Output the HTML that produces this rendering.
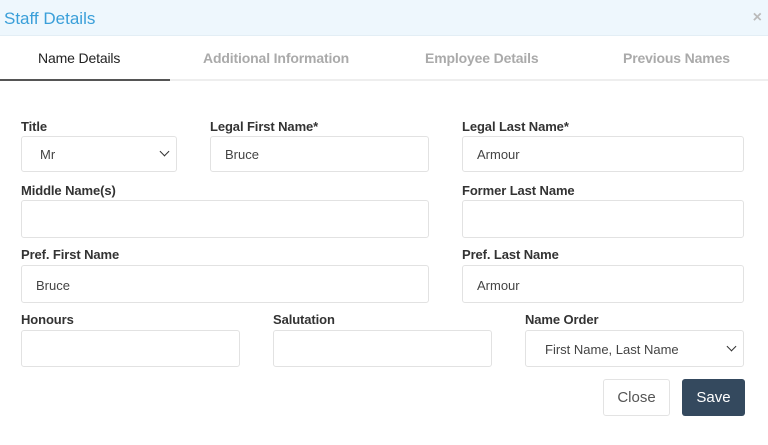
<!DOCTYPE html><html><head><style>
body{margin:0;width:768px;height:445px;background:#fff;font-family:"Liberation Sans",sans-serif;position:relative;overflow:hidden}
.a{position:absolute}
.hd{left:0;top:0;width:768px;height:35px;background:#eef7fd;border-bottom:1px solid #e3eef5}
.t{left:4px;top:9px;font-size:17px;color:#3a9fd9}
.x{right:6px;top:9px;color:#bbb;font-size:16px;font-weight:bold}
.tab{top:50px;font-size:14px;color:#aaa;font-weight:bold;letter-spacing:-0.15px}
.lb{font-size:13px;color:#333;font-weight:bold;letter-spacing:-0.1px}
.in{border:1px solid #e2e2e2;border-radius:3px;height:36px;box-sizing:border-box;font-size:13px;color:#444;padding:10px 0 0 14px}
.ch{position:absolute;right:8px;top:11px;width:6px;height:6px;border-right:1.6px solid #333;border-bottom:1.6px solid #333;transform:rotate(45deg)}
</style></head><body>
<div class="a hd"></div><div class="a t">Staff Details</div><div class="a x">×</div>
<div class="a tab" style="left:38px;color:#222;font-weight:normal">Name Details</div>
<div class="a tab" style="left:203px">Additional Information</div>
<div class="a tab" style="left:425px">Employee Details</div>
<div class="a tab" style="left:623px">Previous Names</div>
<div class="a" style="left:0;top:79px;width:170px;height:2px;background:#555"></div>
<div class="a" style="left:170px;top:79px;width:598px;height:2px;background:#eee"></div>

<div class="a lb" style="left:21px;top:119px">Title</div>
<div class="a in" style="left:21px;top:136px;width:156px;padding-left:18px">Mr<span class="ch"></span></div>
<div class="a lb" style="left:210px;top:119px">Legal First Name*</div>
<div class="a in" style="left:210px;top:136px;width:219px">Bruce</div>
<div class="a lb" style="left:462px;top:119px">Legal Last Name*</div>
<div class="a in" style="left:462px;top:136px;width:282px">Armour</div>

<div class="a lb" style="left:21px;top:183px">Middle Name(s)</div>
<div class="a in" style="left:21px;top:200px;width:408px;height:38px"></div>
<div class="a lb" style="left:462px;top:183px">Former Last Name</div>
<div class="a in" style="left:462px;top:200px;width:282px;height:38px"></div>

<div class="a lb" style="left:21px;top:247px">Pref. First Name</div>
<div class="a in" style="left:21px;top:265px;width:408px;height:38px;padding-top:12px">Bruce</div>
<div class="a lb" style="left:462px;top:247px">Pref. Last Name</div>
<div class="a in" style="left:462px;top:265px;width:282px;height:38px;padding-top:12px">Armour</div>

<div class="a lb" style="left:21px;top:312px">Honours</div>
<div class="a in" style="left:21px;top:330px;width:219px;height:37px"></div>
<div class="a lb" style="left:273px;top:312px">Salutation</div>
<div class="a in" style="left:273px;top:330px;width:219px;height:37px"></div>
<div class="a lb" style="left:525px;top:312px">Name Order</div>
<div class="a in" style="left:525px;top:330px;width:219px;height:37px;padding-left:19px;padding-top:11px">First Name, Last Name<span class="ch" style="top:12px"></span></div>

<div class="a" style="left:603px;top:379px;width:67px;height:37px;border:1px solid #e3e3e3;border-radius:3px;box-sizing:border-box;font-size:15px;color:#555;text-align:center;line-height:35px">Close</div>
<div class="a" style="left:682px;top:379px;width:63px;height:37px;background:#34495e;border-radius:3px;font-size:15px;color:#fff;text-align:center;line-height:37px">Save</div>
</body></html>
